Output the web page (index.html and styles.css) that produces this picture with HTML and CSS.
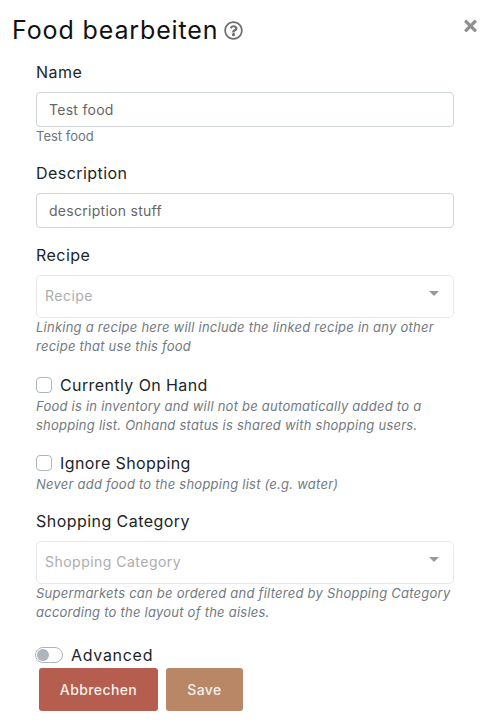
FILE: index.html
```html
<!DOCTYPE html>
<html lang="de">
<head>
<meta charset="utf-8">
<title>Food bearbeiten</title>
<link rel="stylesheet" href="styles.css">
</head>
<body>
<div class="modal">
  <header class="head">
    <h1 class="title">Food bearbeiten</h1>
    <svg class="help" viewBox="0 0 512 512" aria-hidden="true"><path d="M256 8C119 8 8 119 8 256s111 248 248 248 248-111 248-248S393 8 256 8zm0 448c-110.500 0-200-89.500-200-200S145.500 56 256 56s200 89.500 200 200-89.500 200-200 200zm107.200-255.200c0 67-72.400 68.100-72.400 92.900v6.300c0 6.600-5.400 12-12 12h-45.600c-6.600 0-12-5.400-12-12v-8.700c0-35.700 27.100-50 47.600-61.500 17.600-9.900 28.400-16.600 28.400-29.600 0-17.300-22-28.700-39.800-28.700-23.200 0-33.900 11-49 30-4.100 5.100-11.500 6.100-16.700 2.100l-27.800-21.100c-5.100-3.900-6.300-11.100-2.700-16.400C184.800 131.500 214.900 112 261.800 112c49.100 0 101.400 38.300 101.400 88.800zM298 368c0 23.200-18.800 42-42 42s-42-18.800-42-42 18.800-42 42-42 42 18.800 42 42z"/></svg>
    <svg class="close" viewBox="0 0 352 512" aria-hidden="true"><path d="M242.700 256l100.100-100.100c12.300-12.300 12.300-32.200 0-44.500l-22.200-22.200c-12.300-12.300-32.200-12.300-44.500 0L176 189.300 75.900 89.200c-12.300-12.300-32.200-12.300-44.500 0L9.200 111.400c-12.300 12.300-12.300 32.200 0 44.500L109.300 256 9.200 356.100c-12.300 12.300-12.300 32.200 0 44.500l22.200 22.200c12.300 12.300 32.200 12.300 44.500 0L176 322.700l100.100 100.100c12.300 12.300 32.200 12.300 44.500 0l22.200-22.200c12.300-12.300 12.300-32.200 0-44.500L242.700 256z"/></svg>
  </header>
  <form class="body">
    <div class="group group-name">
      <label class="label">Name</label>
      <div class="input">Test food</div>
      <small class="hint">Test food</small>
    </div>
    <div class="group group-desc">
      <label class="label">Description</label>
      <div class="input">description stuff</div>
    </div>
    <div class="group group-recipe">
      <label class="label">Recipe</label>
      <div class="select"><span>Recipe</span><i class="caret"></i></div>
      <p class="note">Linking a recipe here will include the linked recipe in any other<br>recipe that use this food</p>
    </div>
    <div class="group group-hand">
      <div class="check"><span class="box"></span><span class="check-label">Currently On Hand</span></div>
      <p class="note">Food is in inventory and will not be automatically added to a<br>shopping list. Onhand status is shared with shopping users.</p>
    </div>
    <div class="group group-ignore">
      <div class="check"><span class="box"></span><span class="check-label">Ignore Shopping</span></div>
      <p class="note">Never add food to the shopping list (e.g. water)</p>
    </div>
    <div class="group group-cat">
      <label class="label">Shopping Category</label>
      <div class="select"><span>Shopping Category</span><i class="caret"></i></div>
      <p class="note">Supermarkets can be ordered and filtered by Shopping Category<br>according to the layout of the aisles.</p>
    </div>
    <div class="switch"><span class="track"><span class="knob"></span></span><span class="switch-label">Advanced</span></div>
    <div class="actions">
      <button type="button" class="btn btn-cancel">Abbrechen</button>
      <button type="button" class="btn btn-save">Save</button>
    </div>
  </form>
</div>
</body>
</html>
```
FILE: styles.css
```css
* { box-sizing: border-box; }
html, body { margin: 0; padding: 0; background: #fff; }
body { font-family: Inter, "Liberation Sans", sans-serif; color: #212529; height: 723px; overflow: hidden; }

.head { display: flex; align-items: center; height: 60px; padding: 0 15px 0 12px; }
.title { margin: 0; font-size: 25px; font-weight: 400; color: #111; line-height: 60px; letter-spacing: 0.88px; }
.help { width: 19px; height: 19px; margin-left: 6px; fill: #6f6f6f; }
.close { width: 13px; height: 18px; margin-left: auto; margin-bottom: 8px; fill: #8f8f8f; }

.body { padding: 0 38px 0 36px; }
.label { display: block; font-size: 16px; line-height: 24px; color: #212529; letter-spacing: 0.45px; }
.group-name .label { margin-bottom: 8px; }
.input { height: 35px; border: 1px solid #ced4da; border-radius: 4px; padding: 0 12px; font-size: 14px; line-height: 33px; color: #666; letter-spacing: 0.28px; }
.hint { display: block; font-size: 13px; line-height: 19px; color: #6c757d; }
.group-desc { margin-top: 15px; }
.group-desc .label { margin-bottom: 8px; }
.group-recipe { margin-top: 15px; }
.group-recipe .label { margin-bottom: 8px; }
.select { position: relative; height: 43px; border: 1px solid #e8e8e8; border-radius: 5px; padding: 0 8px; font-size: 14px; line-height: 40px; color: #adadad; letter-spacing: 0.48px; }
.caret { position: absolute; right: 14px; top: 15px; border-style: solid; border-width: 5px 5px 0; border-color: #999 transparent transparent; }
.note { margin: 0; font-size: 13px; line-height: 19px; font-style: italic; color: #727a81; white-space: nowrap; letter-spacing: 0.24px; }
.group-recipe .note { padding-top: 0; }
.group-hand { margin-top: 17px; }
.group-ignore { margin-top: 16px; }
.group-cat { margin-top: 15px; }
.group-cat .label { margin-bottom: 8px; }
.check { display: flex; align-items: center; height: 24px; }
.box { width: 16px; height: 16px; border: 1px solid #adb5bd; border-radius: 4px; background: #fff; }
.check-label { margin-left: 8px; font-size: 16px; line-height: 24px; letter-spacing: 0.4px; }
.switch { display: flex; align-items: center; height: 24px; margin-top: 21px; margin-left: -1px; }
.track { display: flex; align-items: center; width: 28px; height: 16px; border: 1px solid #adb5bd; border-radius: 8px; padding-left: 1px; margin-right: 8px; }
.knob { width: 12px; height: 12px; border-radius: 50%; background: #adb5bd; }
.switch-label { font-size: 16px; line-height: 24px; letter-spacing: 0.7px; }
.actions { display: flex; gap: 8px; margin-left: 3px; margin-top: 1px; }
.btn { height: 43px; border: 0; border-radius: 3px; padding: 0; font-family: inherit; font-size: 14px; font-weight: 500; color: #f4efe9; letter-spacing: 0.4px; }
.btn-cancel { width: 119px; background: #b55e4f; }
.btn-save { width: 77px; background: #b98766; }
```
